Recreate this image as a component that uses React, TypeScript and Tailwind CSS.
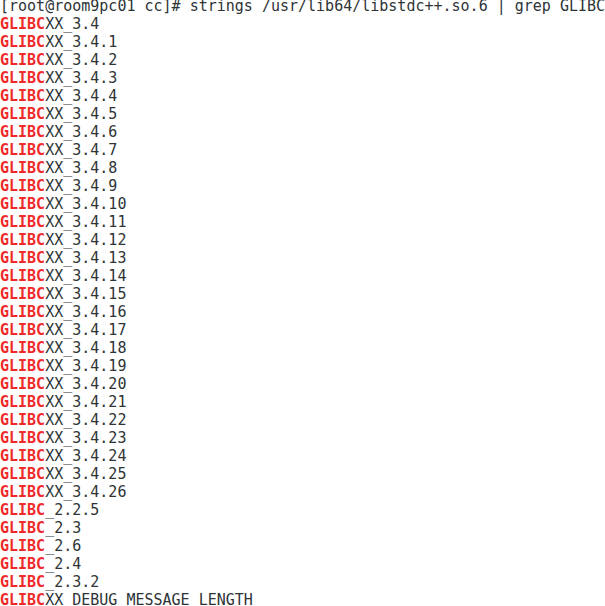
const versions = [
  'XX_3.4', 'XX_3.4.1', 'XX_3.4.2', 'XX_3.4.3', 'XX_3.4.4', 'XX_3.4.5', 'XX_3.4.6',
  'XX_3.4.7', 'XX_3.4.8', 'XX_3.4.9', 'XX_3.4.10', 'XX_3.4.11', 'XX_3.4.12',
  'XX_3.4.13', 'XX_3.4.14', 'XX_3.4.15', 'XX_3.4.16', 'XX_3.4.17', 'XX_3.4.18',
  'XX_3.4.19', 'XX_3.4.20', 'XX_3.4.21', 'XX_3.4.22', 'XX_3.4.23', 'XX_3.4.24',
  'XX_3.4.25', 'XX_3.4.26', '_2.2.5', '_2.3', '_2.6', '_2.4', '_2.3.2',
  'XX_DEBUG_MESSAGE_LENGTH',
]

export default function App() {
  return (
    <div className="h-[606px] w-[605px] overflow-hidden bg-white">
      <div className="mt-[-3px] whitespace-pre text-[15px] leading-[18px] text-[#2e3436] font-['DejaVu_Sans_Mono',monospace]">
        <div>[root@room9pc01 cc]# strings /usr/lib64/libstdc++.so.6 | grep GLIBC</div>
        {versions.map((v, i) => (
          <div key={i}>
            <span className="font-bold text-[#ef2929]">GLIBC</span>
            {v === 'XX_DEBUG_MESSAGE_LENGTH' ? 'XX DEBUG MESSAGE LENGTH' : v}
          </div>
        ))}
      </div>
    </div>
  )
}
